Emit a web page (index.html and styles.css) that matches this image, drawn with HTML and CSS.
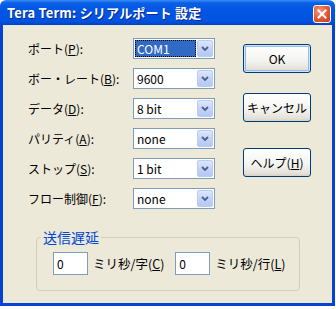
FILE: index.html
```html
<!DOCTYPE html>
<html lang="ja">
<head>
    <meta charset="UTF-8">
    <title>Tera Term: シリアルポート 設定</title>
    <link rel="stylesheet" href="styles.css">
</head>
<body>

    <div class="window">
        <div class="titlebar">
            <span class="title">Tera Term: シリアルポート 設定</span>
            <span class="close">
                <svg width="10" height="10" viewBox="0 0 10 10">
                    <path d="M1.5 1.5 L8.5 8.5 M8.5 1.5 L1.5 8.5" stroke="#fff" stroke-width="2" stroke-linecap="square"/>
                </svg>
            </span>
        </div>

        <div class="client">
            <div class="main">
                <div class="fields">
                    <div class="row">
                        <span class="label">ポート(<u>P</u>):</span>
                        <div class="combo"><span class="value selected">COM1</span><span class="arrow"></span></div>
                    </div>
                    <div class="row">
                        <span class="label">ボー・レート(<u>B</u>):</span>
                        <div class="combo"><span class="value">9600</span><span class="arrow"></span></div>
                    </div>
                    <div class="row">
                        <span class="label">データ(<u>D</u>):</span>
                        <div class="combo"><span class="value">8 bit</span><span class="arrow"></span></div>
                    </div>
                    <div class="row">
                        <span class="label">パリティ(<u>A</u>):</span>
                        <div class="combo"><span class="value">none</span><span class="arrow"></span></div>
                    </div>
                    <div class="row">
                        <span class="label">ストップ(<u>S</u>):</span>
                        <div class="combo"><span class="value">1 bit</span><span class="arrow"></span></div>
                    </div>
                    <div class="row">
                        <span class="label">フロー制御(<u>F</u>):</span>
                        <div class="combo"><span class="value">none</span><span class="arrow"></span></div>
                    </div>
                </div>

                <div class="buttons">
                    <button class="btn default">OK</button>
                    <button class="btn cancel">キャンセル</button>
                    <button class="btn help">ヘルプ(<u>H</u>)</button>
                </div>
            </div>

            <fieldset class="delay">
                <legend>送信遅延</legend>
                <div class="delay-row">
                    <span class="input">0</span>
                    <span class="unit">ミリ秒/字(<u>C</u>)</span>
                    <span class="input second">0</span>
                    <span class="unit">ミリ秒/行(<u>L</u>)</span>
                </div>
            </fieldset>
        </div>
    </div>

</body>
</html>
```

FILE: styles.css
```css
body {
    margin: 0;
    background-color: #ffffff;
    font-family: "Noto Sans CJK JP", "Noto Sans", sans-serif;
    font-size: 12px;
    color: #000000;
}

.window {
    width: 335px;
    height: 306px;
    display: flex;
    flex-direction: column;
}

.titlebar {
    height: 25px;
    display: flex;
    align-items: center;
    justify-content: space-between;
    padding: 0 4px 0 7px;
    border-radius: 6px 6px 0 0;
    background: linear-gradient(#3b8cf6 0, #0a5fe6 3px, #0256e4 40%, #0052e0 85%, #0042c6 100%);
    box-sizing: border-box;
}

.title {
    color: #ffffff;
    font-weight: bold;
    font-size: 13px;
    letter-spacing: 0.2px;
    text-shadow: 1px 1px 0 #0b2a8c;
}

.close {
    width: 18px;
    height: 18px;
    box-sizing: border-box;
    border: 1px solid #ffffff;
    border-radius: 3px;
    background: radial-gradient(circle at 35% 30%, #f0987a, #df5230 60%, #c53d1c);
    display: flex;
    align-items: center;
    justify-content: center;
    margin-top: 3px;
}

.client {
    flex: 1;
    background-color: #ece9d8;
    border: 3px solid #0842d4;
    border-top: none;
    display: flex;
    flex-direction: column;
}

.main {
    display: flex;
    padding: 13px 0 0 25px;
}

.fields {
    width: 187px;
}

.row {
    display: flex;
    align-items: center;
    height: 21px;
    margin-bottom: 9px;
}

.row:last-child {
    margin-bottom: 0;
}

.label {
    width: 105px;
    white-space: nowrap;
}

.combo {
    width: 82px;
    height: 21px;
    box-sizing: border-box;
    border: 1px solid #7f9db9;
    background-color: #ffffff;
    display: flex;
    align-items: center;
    padding: 1px;
}

.value {
    flex: 1;
    height: 17px;
    line-height: 17px;
    padding-left: 2px;
}

.value.selected {
    background-color: #316ac5;
    color: #ffffff;
    outline: 1px dotted #000000;
    outline-offset: -1px;
    margin-right: 1px;
}

.arrow {
    width: 16px;
    height: 17px;
    box-sizing: border-box;
    border: 1px solid #b9cbf3;
    border-radius: 2px;
    background-image:
        url("data:image/svg+xml,%3Csvg xmlns='http://www.w3.org/2000/svg' width='8' height='5' viewBox='0 0 8 5'%3E%3Cpath d='M1 1 L4 4 L7 1' fill='none' stroke='%234d6185' stroke-width='1.8'/%3E%3C/svg%3E"),
        linear-gradient(#dce6fc, #c0d1f8 60%, #b3c8f6);
    background-repeat: no-repeat;
    background-position: center;
}

.buttons {
    display: flex;
    flex-direction: column;
    margin-left: 28px;
    padding-top: 6px;
}

.btn {
    width: 68px;
    height: 29px;
    padding: 0;
    font-family: inherit;
    font-size: 12px;
    color: #000000;
    border: 1px solid #003c74;
    border-radius: 3px;
    background: linear-gradient(#ffffff, #f3f3ef 60%, #e3e1d8 90%, #d6d0c5);
}

.btn.default {
    box-shadow: inset 0 0 0 1px #cee7ff, inset 0 0 0 2px #98b8ea;
}

.btn.cancel {
    margin-top: 20px;
}

.btn.help {
    margin-top: 26px;
}

.delay {
    width: 264px;
    box-sizing: border-box;
    margin: 20px 0 0 33px;
    padding: 7px 10px 15px 16px;
    border: 1px solid #d0d0bf;
    border-radius: 4px;
}

.delay legend {
    color: #0046d5;
    font-size: 14px;
    line-height: 16px;
    padding: 0 2px;
    margin-left: -12px;
}

.delay-row {
    display: flex;
    align-items: center;
}

.input {
    width: 35px;
    height: 23px;
    box-sizing: border-box;
    border: 1px solid #7f9db9;
    background-color: #ffffff;
    line-height: 21px;
    padding-left: 3px;
}

.input.second {
    margin-left: 11px;
}

.unit {
    margin-left: 5px;
    white-space: nowrap;
    font-size: 12.5px;
}
```
